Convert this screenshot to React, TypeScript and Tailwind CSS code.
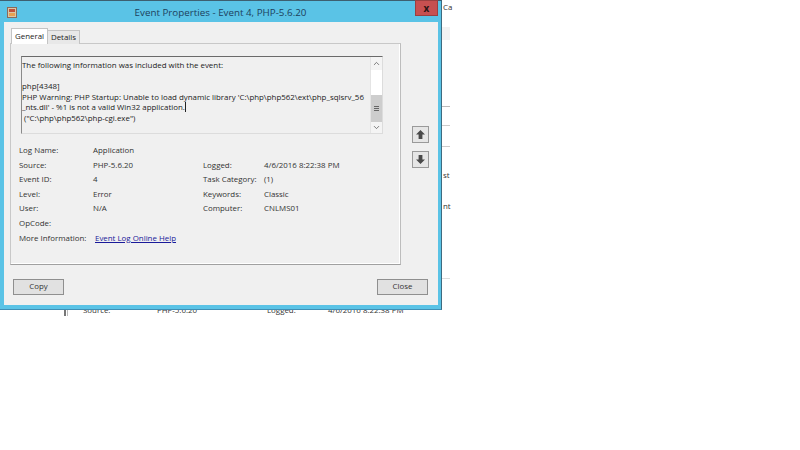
import { ChevronDown, ChevronUp } from 'lucide-react'

const leftRows = [
    ['Log Name:', 'Application'],
    ['Source:', 'PHP-5.6.20'],
    ['Event ID:', '4'],
    ['Level:', 'Error'],
    ['User:', 'N/A'],
    ['OpCode:', ''],
]

const rightRows = [
    ['Logged:', '4/6/2016 8:22:38 PM'],
    ['Task Category:', '(1)'],
    ['Keywords:', 'Classic'],
    ['Computer:', 'CNLMS01'],
]

function ArrowButton({ down }: { down?: boolean }) {
    return (
        <div className="w-[17px] h-[17px] border border-[#9a9a9a] bg-[#e6e6e6] flex items-center justify-center">
            <svg width="11" height="11" viewBox="0 0 11 11" className={down ? 'rotate-180' : ''}>
                <path d="M5.5 1 L10 5.6 H7.4 V10 H3.6 V5.6 H1 Z" fill="#4a4a4a" />
            </svg>
        </div>
    )
}

export default function App() {
    return (
        <div className="relative w-[800px] h-[450px] bg-white overflow-hidden font-['Open_Sans',sans-serif] text-[7.9px] text-[#333]">
            {/* window behind the dialog */}
            <div className="absolute left-0 top-0 w-[450px] h-[316px] bg-white">
                <div className="absolute left-[442px] top-[27px] w-[8px] h-[13px] bg-[#f2f2f2]" />
                <div className="absolute left-[443px] top-[2px] text-[#333]">Ca</div>
                <div className="absolute left-[442px] top-[106px] w-[8px] h-px bg-[#bbb]" />
                <div className="absolute left-[442px] top-[125px] w-[8px] h-px bg-[#ccc]" />
                <div className="absolute left-[442px] top-[146px] w-[8px] h-px bg-[#ccc]" />
                <div className="absolute left-[443px] top-[170px]">st</div>
                <div className="absolute left-[443px] top-[201px]">nt</div>
                <div className="absolute left-[442px] top-[278px] w-[8px] h-px bg-[#ddd]" />
                <div className="absolute left-[64px] top-[309px] w-[2px] h-[7px] bg-[#777]" />
                <div className="absolute left-[67px] top-[309px] w-px h-[7px] bg-[#bbb]" />
                <div className="absolute left-[83px] top-[305px]">Source:</div>
                <div className="absolute left-[157px] top-[305px]">PHP-5.6.20</div>
                <div className="absolute left-[267px] top-[305px]">Logged:</div>
                <div className="absolute left-[328px] top-[305px]">4/6/2016 8:22:38 PM</div>
            </div>

            {/* dialog */}
            <div className="absolute left-0 top-0 w-[442px] h-[310px] bg-[#5ac3e6] border-r border-b border-t border-r-[#3d6b80] border-b-[#3f8fb5] border-t-[#3d5f70] flex flex-col">
                <div className="relative h-[21px] shrink-0 pt-[3px] flex items-center justify-center text-[9.8px] text-[#1d3f5c]">
                    <svg width="10" height="11" viewBox="0 0 10 11" className="absolute left-[7px] top-[6px]">
                        <rect x="0.5" y="0.5" width="9" height="10" fill="#d8c8a8" stroke="#8a6a5a" />
                        <rect x="2" y="2" width="6" height="3" fill="#c0503a" />
                        <rect x="2" y="6" width="6" height="3" fill="#e8a050" />
                    </svg>
                    <span>Event Properties - Event 4, PHP-5.6.20</span>
                    <div className="absolute right-[3px] -top-px w-[23px] h-[16px] bg-[#c75050] border border-[#9a4040] flex items-center justify-center text-[#2a1414] text-[10px] font-bold leading-none">
                        x
                    </div>
                </div>

                <div className="ml-[4px] mr-[3px] h-[283px] bg-[#f0f0f0] flex flex-col pl-[6px] pt-[6px]">
                    <div className="flex items-start">
                        <div className="w-[391px] flex flex-col">
                            {/* tabs */}
                            <div className="flex items-end h-[16px] pl-[1px] relative z-10">
                                <div className="h-[16px] w-[37px] bg-white border border-b-0 border-[#c4c4c4] flex items-center justify-center text-[#222]">
                                    General
                                </div>
                                <div className="h-[14px] w-[32px] bg-[#e8e8e8] border border-b-0 border-l-0 border-[#c4c4c4] flex items-center justify-center text-[#222]">
                                    Details
                                </div>
                            </div>
                            <div className="h-[222px] -mt-px border border-[#c8c8c8] border-r-[#bdbdbd] border-b-[#a0a0a0] shadow-[inset_-1px_-1px_0_#fff] pl-[8px] pr-[17px] flex flex-col">
                                {/* description box */}
                                <div className="mt-[12px] ml-[2px] h-[78px] border border-[#dcdcdc] border-t-[#6a6a6a] border-l-[#8a8a8a] flex">
                                    <div className="flex-1 pt-[3px] leading-[10.6px] text-[#222] whitespace-nowrap overflow-hidden">
                                        <div>The following information was included with the event:</div>
                                        <div className="h-[10.6px]" />
                                        <div>php[4348]</div>
                                        <div>PHP Warning: PHP Startup: Unable to load dynamic library 'C:\php\php562\ext\php_sqlsrv_56</div>
                                        <div>_nts.dll' - %1 is not a valid Win32 application.<span className="border-r border-[#222]" /></div>
                                        <div>&nbsp;("C:\php\php562\php-cgi.exe")</div>
                                    </div>
                                    <div className="w-[12px] shrink-0 flex flex-col bg-white border-l border-[#e4e4e4]">
                                        <div className="h-[13px] flex items-center justify-center bg-[#f4f4f4]">
                                            <ChevronUp className="w-[9px] h-[9px] text-[#555]" strokeWidth={2} />
                                        </div>
                                        <div className="h-[25px]" />
                                        <div className="h-[27px] bg-[#cdcdcd] flex items-center justify-center text-[#666] text-[7px]">
                                            <div className="w-[5px] h-[5px] border-y border-[#666] flex items-center">
                                                <div className="w-full h-px bg-[#666]" />
                                            </div>
                                        </div>
                                        <div className="flex-1 flex items-center justify-center bg-[#f4f4f4]">
                                            <ChevronDown className="w-[9px] h-[9px] text-[#555]" strokeWidth={2} />
                                        </div>
                                    </div>
                                </div>

                                {/* event details */}
                                <div className="mt-[9px] flex leading-[14.6px] text-[#333]">
                                    <div className="w-[184px] shrink-0">
                                        {leftRows.map(([label, value]) => (
                                            <div key={label} className="flex">
                                                <div className="w-[74px] shrink-0">{label}</div>
                                                <div>{value}</div>
                                            </div>
                                        ))}
                                        <div className="flex">
                                            <div className="w-[76px] shrink-0">More Information:</div>
                                            <div className="text-[#1a1a9a] underline whitespace-nowrap">Event Log Online Help</div>
                                        </div>
                                    </div>
                                    <div className="pt-[14.6px]">
                                        {rightRows.map(([label, value]) => (
                                            <div key={label} className="flex">
                                                <div className="w-[61px] shrink-0">{label}</div>
                                                <div>{value}</div>
                                            </div>
                                        ))}
                                    </div>
                                </div>
                            </div>
                        </div>
                        <div className="ml-[11px] mt-[98px] flex flex-col gap-[8px]">
                            <ArrowButton />
                            <ArrowButton down />
                        </div>
                    </div>

                    {/* bottom buttons */}
                    <div className="mt-[14px] pl-[3px] w-[418px] flex justify-between">
                        <div className="w-[51px] h-[16px] bg-[#e1e1e1] border border-[#8f8f8f] flex items-center justify-center">Copy</div>
                        <div className="w-[51px] h-[16px] bg-[#e1e1e1] border border-[#8f8f8f] flex items-center justify-center">Close</div>
                    </div>
                </div>
            </div>
        </div>
    )
}
